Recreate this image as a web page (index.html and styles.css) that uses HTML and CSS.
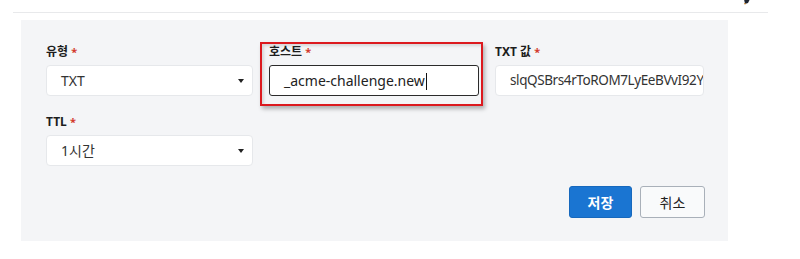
FILE: index.html
```html
<!DOCTYPE html>
<html lang="ko">
<head>
  <meta charset="UTF-8">
  <title>TXT 레코드 추가</title>
  <link rel="stylesheet" href="styles.css">
</head>
<body>
  <div class="topbar">
    <svg class="top-icon" width="10" height="6" viewBox="0 0 10 6">
      <path d="M2 0 L8 0 L6 4 L3 5 Z" fill="#1e2430"/>
      <path d="M2 4 L4 4 L3 6 Z" fill="#c8802a"/>
    </svg>
  </div>

  <div class="panel">
    <div class="form-grid">
      <div class="field">
        <label class="label">유형 <span class="req">*</span></label>
        <div class="select">
          <span>TXT</span>
          <svg width="6" height="4" viewBox="0 0 6 4"><path d="M0 0 H6 L3 4 Z" fill="#222"/></svg>
        </div>
      </div>

      <div class="field highlight">
        <label class="label">호스트 <span class="req">*</span></label>
        <div class="input active">_acme-challenge.new<span class="caret"></span></div>
      </div>

      <div class="field">
        <label class="label">TXT 값 <span class="req">*</span></label>
        <div class="input long">slqQSBrs4rToROM7LyEeBVvI92Y</div>
      </div>

      <div class="field">
        <label class="label">TTL <span class="req">*</span></label>
        <div class="select">
          <span>1시간</span>
          <svg width="6" height="4" viewBox="0 0 6 4"><path d="M0 0 H6 L3 4 Z" fill="#222"/></svg>
        </div>
      </div>
    </div>

    <div class="actions">
      <button class="btn btn-primary">저장</button>
      <button class="btn btn-default">취소</button>
    </div>
  </div>
</body>
</html>
```

FILE: styles.css
```css
html, body {
  margin: 0;
  padding: 0;
  background: #ffffff;
  font-family: 'Noto Sans', 'Noto Sans CJK KR', sans-serif;
  color: #222;
  overflow: hidden;
}

.topbar {
  position: relative;
  height: 12px;
  margin: 0 32px 0 13px;
  border-bottom: 1px solid #e8e9eb;
}

.top-icon {
  position: absolute;
  top: -1px;
  right: 16px;
}

.panel {
  width: 707px;
  height: 221px;
  margin: 7px 0 0 21px;
  padding: 24px 23px 0 25px;
  box-sizing: border-box;
  background: #f4f5f7;
}

.form-grid {
  display: grid;
  grid-template-columns: 207px 210px 209px;
  column-gap: 16px;
  row-gap: 18px;
}

.field {
  position: relative;
  display: flex;
  flex-direction: column;
  gap: 5px;
}

.label {
  font-size: 12px;
  font-weight: bold;
  line-height: 16px;
  color: #1d1d1d;
}

.req {
  color: #d33a2c;
  font-size: 11px;
}

.select,
.input {
  height: 31px;
  box-sizing: border-box;
  background: #fff;
  border: 1px solid #e6e8eb;
  border-radius: 4px;
  padding: 0 8px 0 14px;
  font-size: 14px;
  line-height: 29px;
  color: #333;
  white-space: nowrap;
  overflow: hidden;
}

.select {
  display: flex;
  align-items: center;
  justify-content: space-between;
}

.input.long {
  padding-right: 0;
  font-size: 13.5px;
  letter-spacing: -0.4px;
}

.input.active {
  border: 1px solid #2b2b2b;
  border-radius: 3px;
  color: #222;
}

.caret {
  display: inline-block;
  width: 1px;
  height: 17px;
  margin-left: 1px;
  vertical-align: -4px;
  background: #111;
}

/* red annotation box round the host field */
.highlight::after {
  content: '';
  position: absolute;
  top: -2px;
  left: -9px;
  right: -4px;
  bottom: -10px;
  border: 2px solid #dc1a1f;
  box-shadow:
    2px 3px 4px rgba(0, 0, 0, 0.28),
    inset 2px 2px 3px rgba(0, 0, 0, 0.12);
  pointer-events: none;
}

.actions {
  display: flex;
  justify-content: flex-end;
  gap: 8px;
  margin-top: 20px;
}

.btn {
  height: 32px;
  border-radius: 3px;
  font-family: inherit;
  font-size: 14px;
  font-weight: bold;
  cursor: pointer;
}

.btn-primary {
  width: 63px;
  background: #1a75d2;
  border: 1px solid #1668bd;
  color: #fff;
}

.btn-default {
  width: 65px;
  background: #f9fafb;
  border: 1px solid #a9b0b9;
  color: #222;
  font-weight: normal;
}
```
